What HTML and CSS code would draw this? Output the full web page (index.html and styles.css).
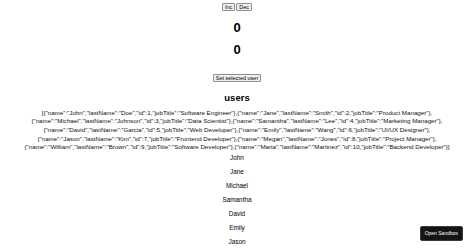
FILE: index.html
```html
<!DOCTYPE html>
<html>
<head>
<meta charset="utf-8">
<link rel="stylesheet" href="styles.css">
</head>
<body>
<div class="app">
  <div class="controls"><button class="btn">Inc</button><button class="btn">Dec</button></div>
  <h2 class="count">0</h2>
  <h2 class="count">0</h2>
  <div class="controls set"><button class="btn">Set selected user</button></div>
  <h2 class="title">users</h2>
  <p class="json">[{"name":"John","lastName":"Doe","id":1,"jobTitle":"Software Engineer"},{"name":"Jane","lastName":"Smith","id":2,"jobTitle":"Product Manager"},{"name":"Michael","lastName":"Johnson","id":3,"jobTitle":"Data Scientist"},{"name":"Samantha","lastName":"Lee","id":4,"jobTitle":"Marketing Manager"},{"name":"David","lastName":"Garcia","id":5,"jobTitle":"Web Developer"},{"name":"Emily","lastName":"Wang","id":6,"jobTitle":"UI/UX Designer"},{"name":"Jason","lastName":"Kim","id":7,"jobTitle":"Frontend Developer"},{"name":"Megan","lastName":"Jones","id":8,"jobTitle":"Project Manager"},{"name":"William","lastName":"Brown","id":9,"jobTitle":"Software Developer"},{"name":"Maria","lastName":"Martinez","id":10,"jobTitle":"Backend Developer"}]</p>
  <ul class="names">
    <li>John</li>
    <li>Jane</li>
    <li>Michael</li>
    <li>Samantha</li>
    <li>David</li>
    <li>Emily</li>
    <li>Jason</li>
    <li>Megan</li>
    <li>William</li>
    <li>Maria</li>
  </ul>
</div>
<a class="sandbox">Open Sandbox</a>
</body>
</html>
```
FILE: styles.css
```css
html, body {
  margin: 0;
  padding: 0;
  background: #fff;
}
body {
  font-family: "Liberation Sans", Arial, sans-serif;
  color: #000;
  text-align: center;
  padding: 0 8px;
}
.app {
  padding-top: 3px;
}
.controls {
  display: flex;
  justify-content: center;
  gap: 1px;
}
.btn {
  font-family: "Liberation Sans", Arial, sans-serif;
  font-size: 5.5px;
  line-height: 6px;
  padding: 0 2px;
  margin: 0;
  background: #efefef;
  border: 1px solid #8f8f8f;
  border-radius: 1px;
  color: #000;
}
.count {
  font-size: 13px;
  line-height: 15px;
  font-weight: bold;
  margin: 7px 0;
}
.count:first-of-type {
  margin-top: 9px;
}
.set {
  margin-top: 17px;
}
.title {
  font-size: 9.5px;
  line-height: 11px;
  font-weight: bold;
  margin: 10px 0 5.6px;
}
.json {
  font-size: 6.2px;
  line-height: 8.7px;
  margin: 0;
  color: #111;
}
.names {
  list-style: none;
  margin: 0;
  padding: 0;
  font-size: 6.4px;
  line-height: 8px;
}
.names li {
  margin-top: 6px;
}
.names li:first-child {
  margin-top: 2px;
}
.sandbox {
  position: fixed;
  right: 11px;
  bottom: 7px;
  background: #151515;
  color: #fff;
  font-size: 5px;
  line-height: 6px;
  padding: 3px 4px 4px;
  border-radius: 2px;
  border: 1px solid #3a3a3a;
}
```
